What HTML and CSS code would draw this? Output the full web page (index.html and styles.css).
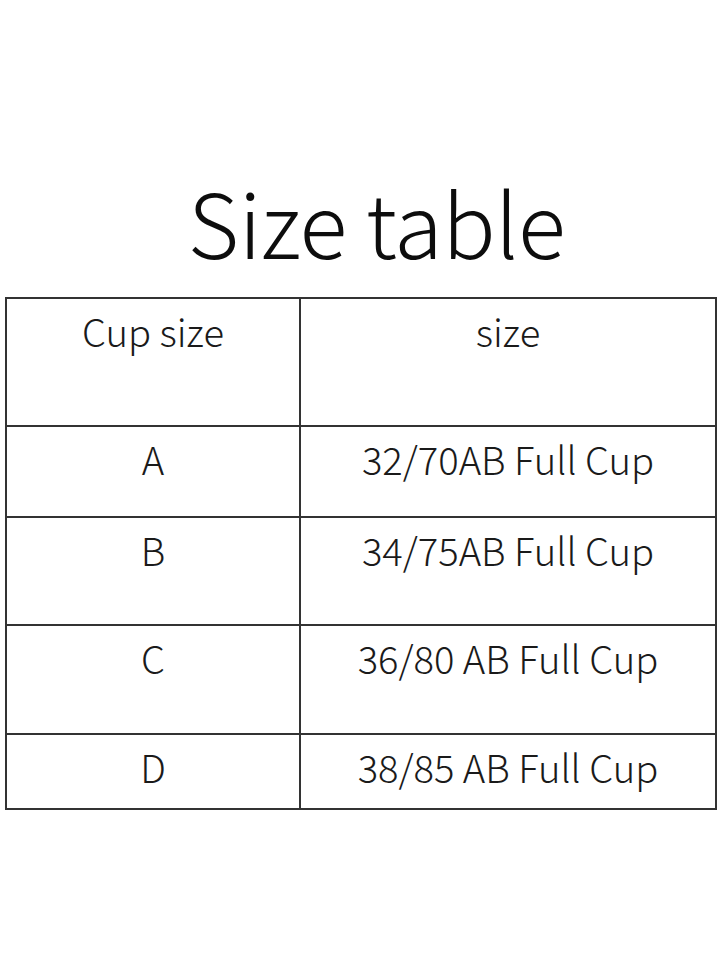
FILE: index.html
```html
<!DOCTYPE html>
<html>
<head>
<meta charset="utf-8">
<link rel="stylesheet" href="styles.css">
</head>
<body>
<div class="page">
  <h1 class="title">Size table</h1>
  <table class="sizes">
    <tr class="r0"><td class="c1">Cup size</td><td class="c2">size</td></tr>
    <tr class="r1"><td class="c1">A</td><td class="c2">32/70AB Full Cup</td></tr>
    <tr class="r2"><td class="c1">B</td><td class="c2">34/75AB Full Cup</td></tr>
    <tr class="r3"><td class="c1">C</td><td class="c2">36/80 AB Full Cup</td></tr>
    <tr class="r4"><td class="c1">D</td><td class="c2">38/85 AB Full Cup</td></tr>
  </table>
</div>
</body>
</html>
```
FILE: styles.css
```css
html, body { margin: 0; padding: 0; background: #fff; }
.page {
  width: 720px;
  height: 959px;
  font-family: "Noto Sans CJK SC", "Noto Sans", sans-serif;
  font-weight: 300;
  color: #1a1a1a;
  padding-top: 168px;
  box-sizing: border-box;
}
.title {
  margin: 0 0 24px 0;
  padding-left: 33px;
  font-weight: 300;
  font-size: 88.5px;
  line-height: 105px;
  text-align: center;
  color: #0d0d0d;
  letter-spacing: -0.5px;
}
.sizes {
  border-collapse: collapse;
  margin-left: 5px;
  width: 712px;
  table-layout: fixed;
}
.sizes td {
  border: 2px solid #333;
  text-align: center;
  vertical-align: top;
  font-size: 38.2px;
  line-height: 44px;
  padding: 10px 0 0 0;
  box-sizing: border-box;
}
.c1 { width: 294px; }
.r0 td { height: 128px; }
.r1 td { height: 91px; }
.r2 td { height: 108px; }
.r3 td { height: 109px; }
.r4 td { height: 75px; }
```
